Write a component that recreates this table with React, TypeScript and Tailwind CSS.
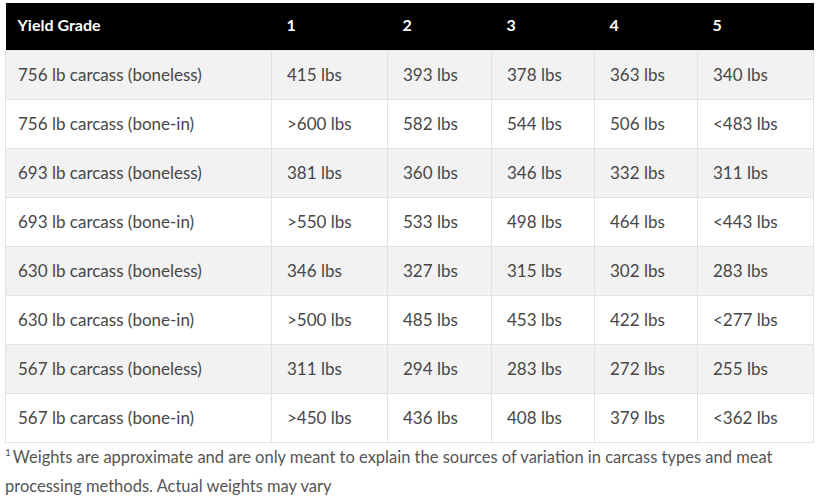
import React from "react";

const rows: string[][] = [
  ["756 lb carcass (boneless)", "415 lbs", "393 lbs", "378 lbs", "363 lbs", "340 lbs"],
  ["756 lb carcass (bone-in)", ">600 lbs", "582 lbs", "544 lbs", "506 lbs", "<483 lbs"],
  ["693 lb carcass (boneless)", "381 lbs", "360 lbs", "346 lbs", "332 lbs", "311 lbs"],
  ["693 lb carcass (bone-in)", ">550 lbs", "533 lbs", "498 lbs", "464 lbs", "<443 lbs"],
  ["630 lb carcass (boneless)", "346 lbs", "327 lbs", "315 lbs", "302 lbs", "283 lbs"],
  ["630 lb carcass (bone-in)", ">500 lbs", "485 lbs", "453 lbs", "422 lbs", "<277 lbs"],
  ["567 lb carcass (boneless)", "311 lbs", "294 lbs", "283 lbs", "272 lbs", "255 lbs"],
  ["567 lb carcass (bone-in)", ">450 lbs", "436 lbs", "408 lbs", "379 lbs", "<362 lbs"],
];

const widths = ["w-[266px]", "w-[116px]", "w-[104px]", "w-[103px]", "w-[103px]", "w-[116px]"];

export default function App() {
  return (
    <div className="w-[820px] h-[500px] bg-white pt-[3px] pl-[5px] overflow-hidden" style={{ fontFamily: "Lato, 'Open Sans', sans-serif" }}>
      <table className="border-collapse w-[808px] table-fixed text-[17px]">
        <thead>
          <tr className="bg-black h-[47px]">
            {["Yield Grade", "1", "2", "3", "4", "5"].map((h, i) => (
              <th key={i} className={`${widths[i]} text-left text-white font-bold text-[16px] ${i === 0 ? "pl-[12px]" : "pl-[15px]"} pb-[2px]`}>
                {h}
              </th>
            ))}
          </tr>
        </thead>
        <tbody>
          {rows.map((r, ri) => (
            <tr key={ri} className={`${ri % 2 === 0 ? "bg-[#f2f2f2]" : "bg-white"} h-[49px]`}>
              {r.map((c, ci) => (
                <td key={ci} className={`border border-[#e2e2e2] text-[#474747] ${ci === 0 ? "pl-[12px]" : "pl-[15px]"} pt-[1px]`}>
                  {c}
                </td>
              ))}
            </tr>
          ))}
        </tbody>
      </table>
      <p className="text-[16.5px] text-[#555] leading-[29px] w-[810px]">
        <span className="inline-block text-[10px] align-top leading-[18px] mr-[2px]">1</span>Weights are approximate and are only meant to explain the sources of variation in carcass types and meat processing methods. Actual weights may vary
      </p>
    </div>
  );
}
